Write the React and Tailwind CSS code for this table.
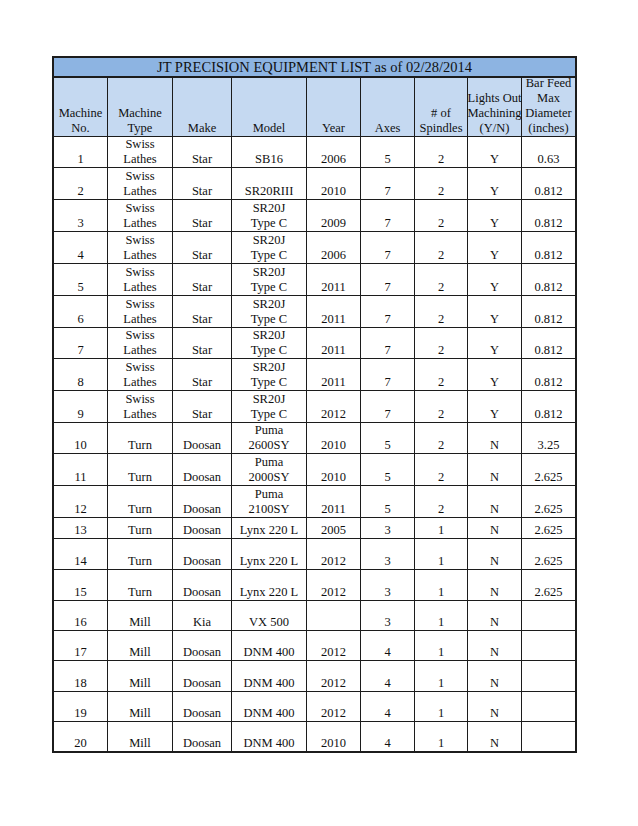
import React from "react";

const widths = ["w-[54px]", "w-[65px]", "w-[59px]", "w-[75px]", "w-[54px]", "w-[54px]", "w-[53px]", "w-[54px]", "w-[53px]"];

const header = [
  ["Machine", "No."],
  ["Machine", "Type"],
  ["Make"],
  ["Model"],
  ["Year"],
  ["Axes"],
  ["# of", "Spindles"],
  ["Lights Out", "Machining", "(Y/N)"],
  ["Bar Feed", "Max", "Diameter", "(inches)"],
];

const SW = ["Swiss", "Lathes"];
const SRJ = ["SR20J", "Type C"];

const rows = [
  { h: "h-[31px]", c: ["1", SW, "Star", "SB16", "2006", "5", "2", "Y", "0.63"] },
  { h: "h-[32px]", c: ["2", SW, "Star", "SR20RIII", "2010", "7", "2", "Y", "0.812"] },
  { h: "h-[32px]", c: ["3", SW, "Star", SRJ, "2009", "7", "2", "Y", "0.812"] },
  { h: "h-[32px]", c: ["4", SW, "Star", SRJ, "2006", "7", "2", "Y", "0.812"] },
  { h: "h-[32px]", c: ["5", SW, "Star", SRJ, "2011", "7", "2", "Y", "0.812"] },
  { h: "h-[32px]", c: ["6", SW, "Star", SRJ, "2011", "7", "2", "Y", "0.812"] },
  { h: "h-[31px]", c: ["7", SW, "Star", SRJ, "2011", "7", "2", "Y", "0.812"] },
  { h: "h-[32px]", c: ["8", SW, "Star", SRJ, "2011", "7", "2", "Y", "0.812"] },
  { h: "h-[32px]", c: ["9", SW, "Star", SRJ, "2012", "7", "2", "Y", "0.812"] },
  { h: "h-[31px]", c: ["10", "Turn", "Doosan", ["Puma", "2600SY"], "2010", "5", "2", "N", "3.25"] },
  { h: "h-[32px]", c: ["11", "Turn", "Doosan", ["Puma", "2000SY"], "2010", "5", "2", "N", "2.625"] },
  { h: "h-[32px]", c: ["12", "Turn", "Doosan", ["Puma", "2100SY"], "2011", "5", "2", "N", "2.625"] },
  { h: "h-[21px]", c: ["13", "Turn", "Doosan", "Lynx 220 L", "2005", "3", "1", "N", "2.625"] },
  { h: "h-[31px]", c: ["14", "Turn", "Doosan", "Lynx 220 L", "2012", "3", "1", "N", "2.625"] },
  { h: "h-[31px]", c: ["15", "Turn", "Doosan", "Lynx 220 L", "2012", "3", "1", "N", "2.625"] },
  { h: "h-[30px]", c: ["16", "Mill", "Kia", "VX 500", "", "3", "1", "N", ""] },
  { h: "h-[30px]", c: ["17", "Mill", "Doosan", "DNM 400", "2012", "4", "1", "N", ""] },
  { h: "h-[31px]", c: ["18", "Mill", "Doosan", "DNM 400", "2012", "4", "1", "N", ""] },
  { h: "h-[30px]", c: ["19", "Mill", "Doosan", "DNM 400", "2012", "4", "1", "N", ""] },
  { h: "h-[29px]", c: ["20", "Mill", "Doosan", "DNM 400", "2010", "4", "1", "N", ""] },
];

function Cell({ i, content }) {
  const lines = Array.isArray(content) ? content : [content];
  return (
    <div
      className={`${widths[i]} shrink-0 h-full flex flex-col justify-end items-center text-center ${
        i < 8 ? "border-r border-[#1c1c1c]" : ""
      }`}
    >
      {lines.map((l, k) => (
        <div key={k} className="whitespace-nowrap leading-[15px] font-['Liberation_Serif','Times_New_Roman',serif]">
          {l}
        </div>
      ))}
    </div>
  );
}

export default function App() {
  return (
    <div className="min-h-[826px] bg-white pt-[56px] pl-[52px] text-[12.5px] text-[#111] font-['Liberation_Serif','Times_New_Roman',serif]">
      <div className="w-[525px] border-2 border-[#1c1c1c]">
        <div className="h-[20px] bg-[#8DB4E2] border-b-2 border-[#1c1c1c] flex items-center justify-center text-[14.5px] leading-[18px] whitespace-nowrap">
          JT PRECISION EQUIPMENT LIST as of 02/28/2014
        </div>
        <div className="h-[59px] flex bg-[#C5D9F1] border-b border-[#1c1c1c]">
          {header.map((c, i) => (
            <Cell key={i} i={i} content={c} />
          ))}
        </div>
        {rows.map((r, ri) => (
          <div
            key={ri}
            className={`${r.h} flex ${ri < rows.length - 1 ? "border-b border-[#1c1c1c]" : ""}`}
          >
            {r.c.map((c, i) => (
              <Cell key={i} i={i} content={c} />
            ))}
          </div>
        ))}
      </div>
    </div>
  );
}
